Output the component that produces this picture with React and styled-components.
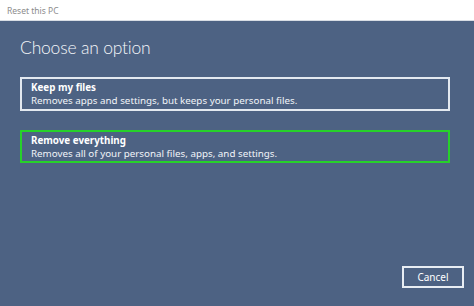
import React from "react";
import styled, { createGlobalStyle } from "styled-components";

const Global = createGlobalStyle`
  html, body { margin: 0; padding: 0; background: #4d6283; }
  #root { width: 474px; height: 306px; }
  * { box-sizing: border-box; }
`;

const Window = styled.div`
  width: 474px;
  height: 306px;
  display: flex;
  flex-direction: column;
  font-family: "Noto Sans", "Open Sans", sans-serif;
`;

const TitleBar = styled.div`
  height: 21px;
  flex: none;
  background: #ffffff;
  display: flex;
  align-items: center;
  padding-left: 7px;
  font-size: 8.5px;
  color: #8c8c8c;
  border-bottom: 1px solid #d8dde4;
`;

const Body = styled.div`
  flex: 1;
  background: #4d6283;
  display: flex;
  flex-direction: column;
  padding: 14px 10px 18px 20px;
  color: #ffffff;
`;

const Heading = styled.h1`
  margin: 0;
  font-family: "Lato", "Open Sans", sans-serif;
  font-weight: 300;
  font-size: 17.5px;
  letter-spacing: -0.2px;
  line-height: 25px;
  color: #f4f6f9;
`;

const Options = styled.div`
  display: flex;
  flex-direction: column;
  gap: 19px;
  margin-top: 17px;
  margin-right: 14px;
`;

const Option = styled.button`
  display: flex;
  flex-direction: column;
  align-items: flex-start;
  width: 100%;
  height: ${(p) => p.$h}px;
  padding: 2px 0 0 9px;
  background: transparent;
  border: 2px solid ${(p) => (p.$selected ? "#27d12a" : "#e3e9f0")};
  color: #ffffff;
  font-family: inherit;
  text-align: left;
  cursor: pointer;
`;

const OptionTitle = styled.span`
  font-size: 9.8px;
  font-weight: 700;
  line-height: 13px;
`;

const OptionDesc = styled.span`
  font-size: 9.8px;
  line-height: 14px;
  color: #f1f4f8;
`;

const Footer = styled.div`
  margin-top: auto;
  display: flex;
  justify-content: flex-end;
`;

const CancelButton = styled.button`
  width: 62px;
  height: 22px;
  background: transparent;
  border: 2px solid #e8edf3;
  color: #ffffff;
  font-family: inherit;
  font-size: 10px;
  padding: 0;
  cursor: pointer;
`;

export default function App() {
  return (
    <>
      <Global />
      <Window>
        <TitleBar>Reset this PC</TitleBar>
        <Body>
          <Heading>Choose an option</Heading>
          <Options>
            <Option $h={34}>
              <OptionTitle>Keep my files</OptionTitle>
              <OptionDesc>Removes apps and settings, but keeps your personal files.</OptionDesc>
            </Option>
            <Option $h={33} $selected>
              <OptionTitle>Remove everything</OptionTitle>
              <OptionDesc>Removes all of your personal files, apps, and settings.</OptionDesc>
            </Option>
          </Options>
          <Footer>
            <CancelButton>Cancel</CancelButton>
          </Footer>
        </Body>
      </Window>
    </>
  );
}
